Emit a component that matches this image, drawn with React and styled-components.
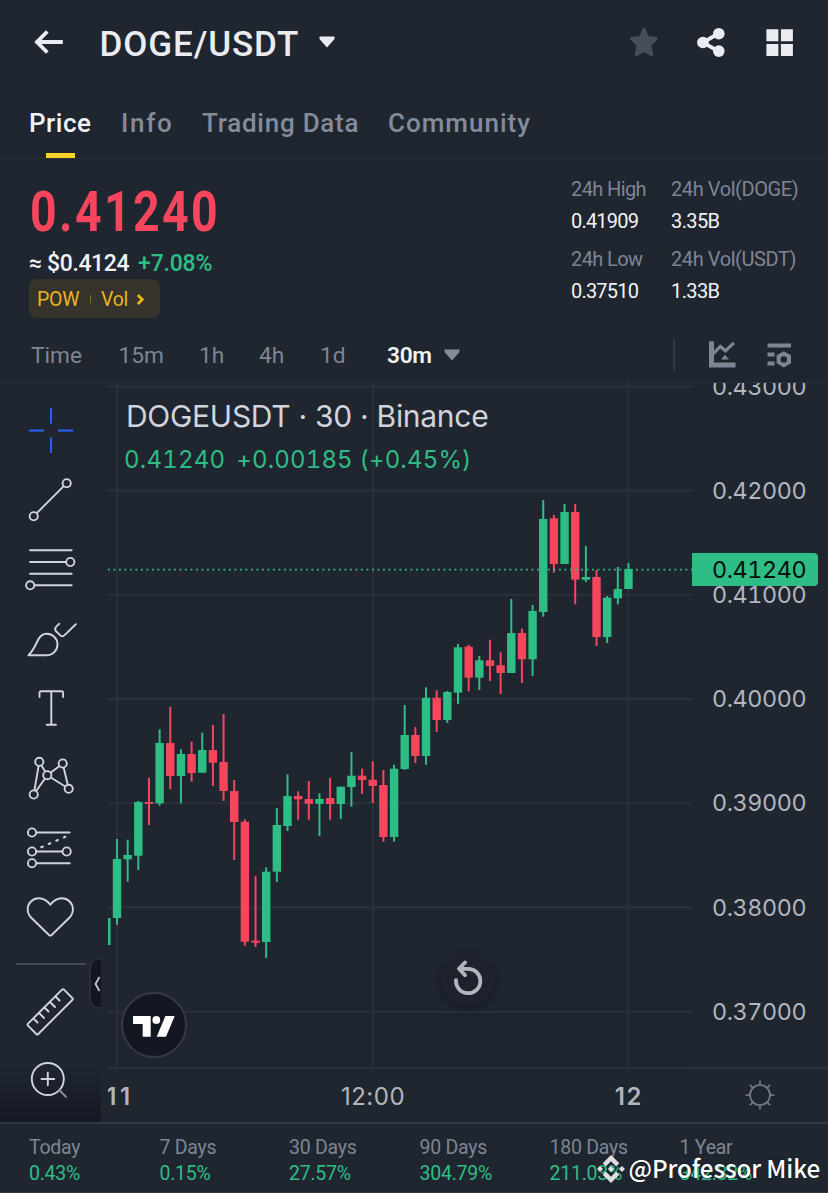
import React from "react";
import styled, { createGlobalStyle } from "styled-components";

const Global = createGlobalStyle`
  * { box-sizing: border-box; }
  html, body { margin: 0; padding: 0; background: #1f2630; }
  body { overflow: hidden; }
  svg { display: block; }
`;

const UP = "#2ebd85";
const DOWN = "#f6465d";
const MUTED = "#7e8594";
const LINE = "#2b313c";

const Screen = styled.div`
  width: 828px;
  height: 1193px;
  background: #1f2630;
  color: #eaecef;
  font-family: Roboto, "Noto Sans", sans-serif;
  display: flex;
  flex-direction: column;
  overflow: hidden;
`;

const Header = styled.header`
  height: 84px;
  flex: none;
  padding: 0 34px;
  display: flex;
  align-items: center;
  line-height: 1;
`;

const Pair = styled.h1`
  margin: 4.5px 0 0 35.5px;
  width: 219px;
  font-size: 35px;
  font-weight: 500;
  letter-spacing: 0.9px;
  white-space: nowrap;
  color: #eaecf2;
`;

const HeaderActions = styled.div`
  margin-left: auto;
  display: flex;
  align-items: center;
  gap: 38px;
`;

const Tabs = styled.nav`
  height: 75px;
  flex: none;
  padding-left: 29px;
  display: grid;
  grid-template-columns: 92px 81px 186px auto;
  border-bottom: 1.5px solid ${LINE};
`;

const Tab = styled.div`
  display: flex;
  flex-direction: column;
  align-items: flex-start;
  padding-top: 24px;
  font-size: 26px;
  line-height: 30px;
  font-weight: 500;
  letter-spacing: ${(p) => p.$track || 0.5}px;
  white-space: nowrap;
  color: ${(p) => (p.$active ? "#f2f3f6" : "#848b9b")};
`;

const Underline = styled.span`
  width: 29px;
  height: 5px;
  margin: 15px 0 0 17px;
  background: #fcd12b;
`;

const Ticker = styled.section`
  height: 168px;
  flex: none;
  padding: 0 0 0 29px;
  display: flex;
  justify-content: space-between;
`;

const PriceBlock = styled.div`
  padding-top: 24px;
`;

const BigPrice = styled.div`
  height: 60px;
  line-height: 58px;
  font-size: 55px;
  font-weight: 700;
  letter-spacing: 2.8px;
  margin-left: 1px;
  color: ${DOWN};
  transform: scaleX(0.845);
  transform-origin: left center;
  width: 200px;
`;

const SubPrice = styled.div`
  margin-top: 6px;
  height: 30px;
  line-height: 30px;
  font-size: 23px;
  font-weight: 500;
  letter-spacing: -0.4px;
  white-space: nowrap;
  color: #f1f2f5;
  display: flex;
  gap: 9px;
`;

const Change = styled.span`
  color: ${UP};
  letter-spacing: -0.2px;
`;

const Chip = styled.div`
  width: 131px;
  height: 39px;
  border-radius: 8px;
  background: #36332c;
  color: #e8b51e;
  font-size: 19.5px;
  line-height: 39px;
  letter-spacing: -0.2px;
  padding: 1px 0 0 8px;
  display: flex;
  align-items: center;
`;

const ChipBar = styled.i`
  width: 1.5px;
  height: 8px;
  margin: 0 9.5px 0 10.5px;
  background: #8a7022;
`;

const Stats = styled.div`
  width: 257px;
  padding-top: 15.4px;
  display: grid;
  grid-template-columns: 100px auto;
  grid-auto-rows: 70px;
  font-size: 20px;
`;

const Stat = styled.div`
  line-height: 31px;
  letter-spacing: ${(p) => p.$track || -0.42}px;
  white-space: nowrap;
  color: ${MUTED};
`;

const StatValue = styled.div`
  letter-spacing: ${(p) => p.$track || -0.8}px;
  padding-top: 0.6px;
  color: #f1f2f5;
`;

const Intervals = styled.div`
  height: 56px;
  flex: none;
  padding: 1px 0 0 31px;
  display: grid;
  grid-template-columns: 87.5px 80.5px 60px 61px 67px 56.5px 229.5px 35.5px 58.5px auto;
  align-items: center;
  border-bottom: 1.5px solid ${LINE};
  font-size: 22.7px;
  svg { margin-top: -1px; }
`;

const Interval = styled.span`
  color: ${(p) => (p.$active ? "#f1f2f5" : MUTED)};
  font-weight: ${(p) => (p.$active ? 600 : 400)};
  letter-spacing: ${(p) => (p.$active ? -0.3 : 0)}px;
  padding-top: 1px;
`;

const VRule = styled.i`
  width: 1.5px;
  height: 32px;
  background: #333945;
`;

const ChartArea = styled.main`
  height: 739px;
  flex: none;
  display: flex;
  font-family: Inter, "Liberation Sans", sans-serif;
`;

const Toolbar = styled.aside`
  position: relative;
  width: 101px;
  flex: none;
  padding-top: 12.4px;
  display: flex;
  flex-direction: column;
  align-items: center;
  background: linear-gradient(to bottom, transparent 684px, #151823 739px);
`;

const Tool = styled.div`
  height: ${(p) => p.$h || 69.5}px;
  flex: none;
  display: flex;
  align-items: center;
  padding-left: 1px;
`;

const ToolRule = styled.hr`
  width: 70px;
  height: 2px;
  border: 0;
  margin: 11.6px 0 13.5px;
  flex: none;
  background: #454a55;
`;

const CollapseTab = styled.div`
  position: absolute;
  right: 0;
  top: 575px;
  width: 12px;
  height: 51px;
  border: 2px solid #2a2e39;
  border-right: 0;
  border-radius: 9px 0 0 9px;
  background: #131722;
  display: flex;
  align-items: center;
  padding-left: 3px;
`;

const PlotColumn = styled.div`
  position: relative;
  width: 584px;
  margin-left: 7px;
  flex: none;
`;

const Legend = styled.div`
  position: absolute;
  left: 18px;
  top: 15px;
  white-space: nowrap;
`;

const LegendTitle = styled.div`
  font-size: 30px;
  line-height: 36px;
  letter-spacing: -0.29px;
  color: #d1d4dc;
`;

const LegendValues = styled.div`
  margin: 10px 0 0 -2px;
  font-size: 24px;
  line-height: 32px;
  letter-spacing: 0.2px;
  font-feature-settings: "tnum";
  color: ${UP};
  display: flex;
  gap: ${(p) => p.$gap || 11}px;
`;

const TvBadge = styled.div`
  position: absolute;
  left: 13px;
  top: 609px;
  width: 66px;
  height: 66px;
  border-radius: 50%;
  border: 2px solid #363a45;
  background: #131722;
  display: flex;
  align-items: center;
  justify-content: center;
  padding-top: 2px;
`;

const ResetButton = styled.div`
  position: absolute;
  left: 333px;
  top: 569px;
  width: 54px;
  height: 54px;
  border-radius: 50%;
  background: #1e222d;
  box-shadow: 0 3px 7px rgba(12, 14, 24, 0.55);
  display: flex;
  align-items: center;
  justify-content: center;
`;

const TimeAxis = styled.div`
  height: 53px;
  display: flex;
  overflow: hidden;
  font-size: 24px;
  line-height: 55px;
  color: #b2b5be;
`;

const TimeLabel = styled.span`
  width: ${(p) => p.$w}px;
  margin-left: ${(p) => p.$ml || 0}px;
  flex: none;
  text-align: center;
  font-weight: ${(p) => (p.$bold ? 600 : 400)};
  letter-spacing: ${(p) => p.$track}px;
`;

const PriceAxis = styled.div`
  position: relative;
  width: 136px;
  height: 739px;
  flex: none;
  display: flex;
  flex-direction: column;
`;

const PriceScale = styled.div`
  height: 686px;
  overflow: hidden;
  border-bottom: 2px solid ${LINE};
`;

const PriceTick = styled.div`
  height: 104.2px;
  line-height: 104.2px;
  padding-left: 20px;
  font-size: 23.3px;
  letter-spacing: -0.4px;
  font-feature-settings: "tnum";
  color: #b2b5be;
  &:first-child { margin-top: -48.4px; }
`;

const LastPrice = styled.div`
  position: absolute;
  left: 0;
  top: 170px;
  width: 126px;
  height: 33px;
  border-radius: 0 4px 4px 0;
  background: ${UP};
  color: #05100c;
  padding-left: 20px;
  font-size: 23.3px;
  line-height: 33px;
  letter-spacing: -0.4px;
  font-feature-settings: "tnum";
`;

const AxisCorner = styled.div`
  height: 51px;
  display: flex;
  align-items: center;
  justify-content: center;
`;

const Returns = styled.footer`
  position: relative;
  height: 71px;
  flex: none;
  border-top: 2px solid #333944;
  border-bottom: 1.5px solid #333944;
  padding: 9.6px 0 0 29px;
  display: grid;
  grid-template-columns: 130.5px 129.5px 130.5px 130px 130px auto;
  font-size: 19.5px;
  line-height: 27px;
`;

const Period = styled.div`
  color: ${MUTED};
  letter-spacing: -0.25px;
  white-space: nowrap;
`;

const PeriodValue = styled.div`
  color: ${UP};
  letter-spacing: -0.25px;
  margin-top: -0.8px;
`;

const Watermark = styled.div`
  position: absolute;
  right: 8px;
  bottom: 6px;
  display: flex;
  align-items: center;
  gap: 4px;
  color: #fff;
  font-family: "Noto Sans CJK SC", "Noto Sans", sans-serif;
  font-size: 24.2px;
  line-height: 36px;
  font-weight: 500;
  letter-spacing: -0.1px;
  white-space: nowrap;
  text-shadow: 0 0 2px rgba(0, 0, 0, 0.35);
  span { margin-top: -2.5px; }
`;

/* high, body top, body bottom, low (screen y), rising */
const candles = [
  [918, 918, 945, 945, 1],
  [839, 859, 918, 924.7, 1], [839.7, 855, 859.3, 881.7, 1], [801, 802, 855.7, 870, 1],
  [777.7, 802, 804, 825, 0], [729.3, 743, 803.3, 805.7, 1], [706.7, 743, 776, 789.3, 0],
  [749.3, 754, 776, 803.3, 1], [741.7, 754, 773, 781.7, 0], [732.7, 750, 772.7, 772.7, 1],
  [725, 750, 762.7, 786, 0], [714, 762, 791, 801, 0], [780, 791, 822, 860, 0],
  [819.3, 821.7, 941.7, 945.7, 0], [876, 940.7, 942.7, 947, 0], [867.3, 871.7, 942, 958, 1],
  [808, 825, 871.7, 882, 1], [774.3, 796, 826, 831, 1], [791.3, 796, 799.3, 819.7, 0],
  [781, 799, 803.7, 819.7, 0], [793.3, 799, 803.7, 836, 1], [777.7, 798, 804, 819.7, 0],
  [786.7, 786.7, 804, 819, 1], [752, 775.7, 787, 806.7, 1], [768.7, 775.7, 780, 794, 0],
  [761.3, 779.7, 786, 803, 0], [770, 785, 837, 841.7, 0], [764.7, 768.7, 837, 841.7, 1],
  [705, 735, 769, 770, 1], [727, 735, 756, 763, 0], [687.3, 697.7, 756, 764.7, 1],
  [690.3, 697.7, 720, 732, 0], [691, 692, 720, 723, 1], [644, 647.3, 692.7, 704, 1],
  [645, 646.7, 677.7, 691.3, 0], [656, 660.3, 677.7, 690, 1], [639.7, 660.3, 666, 681, 0],
  [652.3, 665.3, 673, 694, 0], [599, 633, 673, 673, 1], [628.7, 633, 659.3, 683, 0],
  [605, 611, 659.3, 676, 1], [500, 519, 612, 616.7, 1], [515, 518.3, 564, 572.7, 0],
  [504, 512, 564, 564, 1], [504, 512, 579.7, 604.3, 0], [546, 577, 579.7, 582, 1],
  [570, 577, 637, 646, 0], [596, 597.7, 637, 643, 1], [567, 589, 598.3, 604.3, 1],
  [563, 569, 589, 589, 1],
];

const hLines = [386.5, 490.5, 594.8, 699, 803.2, 907.5, 1011.6];
const vLines = [117, 373, 628.5];

function Plot() {
  return (
    <svg width="584" height="686" viewBox="108 383 584 686">
      <g stroke="#2c323d" strokeWidth="1.8">
        {hLines.map((y) => <line key={y} x1="108" x2="692" y1={y} y2={y} />)}
        {vLines.map((x) => <line key={x} x1={x} x2={x} y1="383" y2="1068" />)}
        <line x1="108" x2="692" y1="1068.2" y2="1068.2" />
      </g>
      {candles.map(([h, t, b, l, up], i) => {
        const x = 117 + (i - 1) * 10.656;
        return (
          <g key={i} fill={up ? UP : DOWN}>
            <rect x={x - 1} y={h} width="2" height={l - h} />
            <rect x={x - 4.2} y={t} width="8.4" height={b - t} />
          </g>
        );
      })}
      <line x1="108" x2="692" y1="569.7" y2="569.7" stroke={UP} strokeWidth="1.8" strokeDasharray="1.8 3.7" />
    </svg>
  );
}

function ToolIcon({ children, color = "#d1d4dc" }) {
  return (
    <svg width="60" height="60" viewBox="-30 -30 60 60" fill="none" stroke={color} strokeWidth="1.9" strokeLinecap="round" strokeLinejoin="round">
      {children}
    </svg>
  );
}

const Ring = ({ x, y }) => <circle cx={x} cy={y} r="4.1" fill="#1f2630" />;

const tools = [
  <ToolIcon key="cross" color="#2962ff"><path strokeLinecap="butt" d="M0-22V-6.500M0 7.500V23M-22 .5H-7M7 .5H22.3" /></ToolIcon>,
  <ToolIcon key="trend"><path d="M-17.3 16.2 15.7-16.8" /><Ring x={-17.3} y={16.2} /><Ring x={15.7} y={-16.8} /></ToolIcon>,
  <ToolIcon key="fib">
    <path d="M-21-18.7H20.7M-21-7H15M-21 4.7H20.7M-17 16.3H20.7" />
    <Ring x={19.3} y={-7} /><Ring x={-20.8} y={16.3} />
  </ToolIcon>,
  <ToolIcon key="brush">
    <path d="M-22.600 16.300C-18 12-15.500 6.500-13 1C-11-3-8-5.300-4.300-5.300A10.800 10.800 0 0 1-4.300 16.300Z" />
    <path d="M8.300-15.300C4.500-12.500 3-10.500 4.800-8L9.300-3.600Q11.300-1.800 13.300-3.600L24.800-14.800" />
  </ToolIcon>,
  <ToolIcon key="text"><path d="M-11.500-11V-15Q-11.500-16.700-10-16.700H10.600Q12.100-16.700 12.100-15V-11M.3-16.700V16.700M-4.300 16.700H5" /></ToolIcon>,
  <ToolIcon key="pattern">
    <path d="M-17.3 16.500-11.700-16.200-3.700-2.800ZM-3.700-2.800 11.700-14.500 17.700 10.800Z" />
    <Ring x={-11.7} y={-16.2} /><Ring x={11.7} y={-14.5} /><Ring x={-3.7} y={-2.8} /><Ring x={-17.3} y={16.5} /><Ring x={17.7} y={10.8} />
  </ToolIcon>,
  <ToolIcon key="forecast">
    <path d="M-19-14.500H18.700M-19 4.500H15.700M-19 16.200H18.700" />
    <path d="M-9.700.2 15-10.500" strokeDasharray="1.600 6.600" strokeWidth="2.200" />
    <Ring x={-19} y={-14.5} /><Ring x={-19} y={4.5} /><Ring x={15.7} y={4.5} /><Ring x={-19} y={16.2} />
  </ToolIcon>,
  <ToolIcon key="heart">
    <path d="M-.7-12.300C-4-16.500-7.500-18.700-12-18.700C-18.500-18.700-23.300-14-23.300-7.500C-23.300-4-22-1.500-19.500 1L-2 18Q-.7 19.200.6 18L18.100 1C20.600-1.500 21.900-4 21.900-7.500C21.900-14 17.100-18.700 10.600-18.700C6.100-18.700 2.600-16.500-.7-12.300Z" />
  </ToolIcon>,
];

function ArrowLeft() {
  return (
    <svg width="30" height="26" viewBox="0 0 30 26" fill="none" stroke="#eaecf2" strokeWidth="3.900">
      <path d="M13.300 2.500 3 13 13.300 23.500M2.500 13H28.800" />
    </svg>
  );
}

function Caret({ color }) {
  return <svg width="16" height="12" viewBox="0 0 16 12"><path fill={color} d="M.5.500H15.500V3L8 11.600.5 3Z" /></svg>;
}

export default function App() {
  return (
    <Screen>
      <Global />
      <Header>
        <ArrowLeft />
        <Pair>DOGE/USDT</Pair>
        <Caret color="#eaecf2" />
        <HeaderActions>
          <svg width="30" height="30" viewBox="0 0 30 30">
            <path d="M16 2.200 19.600 10.400 28.300 11.500 22 18 23.700 27.700 16 23.300 8.300 27.700 10 18 3.500 11.500 12.400 10.400Z" fill="#474d5b" stroke="#474d5b" strokeWidth="2.800" strokeLinejoin="round" />
          </svg>
          <svg width="30" height="30" viewBox="0 0 30 30" fill="#eaecf2" stroke="#eaecf2">
            <path d="M22.200 6.700 7 15.500 22.200 24.100" fill="none" strokeWidth="3.800" />
            <g stroke="none"><circle cx="6.900" cy="15.500" r="5.800" /><circle cx="22.800" cy="6.700" r="5.800" /><circle cx="22.800" cy="24.100" r="5.800" /></g>
          </svg>
          <svg width="30" height="30" viewBox="0 0 30 30" fill="#eaecf2">
            <path d="M2.400 2.300h12v12h-12zM16.900 2.300h12v12h-12zM2.400 17h12v12h-12zM16.900 17h12v12h-12z" />
          </svg>
        </HeaderActions>
      </Header>

      <Tabs>
        <Tab $active>Price<Underline /></Tab>
        <Tab $track={1.7}>Info</Tab>
        <Tab $track={0.75}>Trading Data</Tab>
        <Tab $track={1}>Community</Tab>
      </Tabs>

      <Ticker>
        <PriceBlock>
          <BigPrice>0.41240</BigPrice>
          <SubPrice><span>≈ $0.4124</span><Change>+7.08%</Change></SubPrice>
          <Chip>
            POW<ChipBar />Vol
            <svg width="9" height="13" viewBox="0 0 10 14" style={{ marginLeft: 8 }} fill="none" stroke="#f0b90b" strokeWidth="3"><path d="M2 2 7 7 2 12" /></svg>
          </Chip>
        </PriceBlock>
        <Stats>
          <Stat $track={-0.6}>24h High<StatValue>0.41909</StatValue></Stat>
          <Stat>24h Vol(DOGE)<StatValue $track={-0.6}>3.35B</StatValue></Stat>
          <Stat $track={-0.6}>24h Low<StatValue>0.37510</StatValue></Stat>
          <Stat>24h Vol(USDT)<StatValue $track={-0.6}>1.33B</StatValue></Stat>
        </Stats>
      </Ticker>

      <Intervals>
        <Interval>Time</Interval>
        <Interval>15m</Interval>
        <Interval>1h</Interval>
        <Interval>4h</Interval>
        <Interval>1d</Interval>
        <Interval $active>30m</Interval>
        <Caret color="#848b9b" />
        <VRule />
        <svg width="27" height="27" viewBox="0 0 27 27" fill="none" stroke="#7e8594">
          <path d="M2.500.3V24H26.500" strokeWidth="5" />
          <path d="M4 13 11.300 5.500 16.500 9.800 24.800 1.800" strokeWidth="3.200" />
          <path d="M12 18.500 16 13.800 20 18.500Z" fill="#7e8594" stroke="none" />
        </svg>
        <svg width="25" height="26" viewBox="0 0 25 26" fill="#7e8594">
          <path d="M.5 1.500h23.500v4H.5zM.5 10.500h7v4h-7zM.5 19.500h7v4h-7z" />
          <path fillRule="evenodd" d="M16.800 9.200 24 13.300V21.300L16.800 25.500 9.600 21.300V13.300ZM16.800 14.200a3.200 3.200 0 1 0 0 6.400a3.200 3.200 0 1 0 0-6.400Z" />
        </svg>
      </Intervals>

      <ChartArea>
        <Toolbar>
          {tools.map((t) => <Tool key={t.key}>{t}</Tool>)}
          <ToolRule />
          <Tool $h={67}>
            <ToolIcon>
              <path d="M11-22.300Q12-23.200 13-22.300L21.300-14Q22.300-13 21.300-12L-12.700 22Q-13.700 23-14.700 22L-23 13.700Q-24 12.700-23 11.700Z" />
              <path d="M-17.500 6.500-13.500 10.500M-12 1-7 6M-6.500-4.500-2.500-.5M-1-10 4-5M4.500-15.500 8.500-11.500" />
            </ToolIcon>
          </Tool>
          <Tool $h={69}>
            <ToolIcon>
              <circle cx="-3.200" cy="-1" r="16" />
              <path d="M-9.500-1H3.200M-3.200-7.400V5.300" />
              <path d="M8.200 10 15 16.800" stroke="#8d909b" />
            </ToolIcon>
          </Tool>
          <CollapseTab>
            <svg width="6" height="16" viewBox="0 0 6 16" fill="none" stroke="#c5c8d0" strokeWidth="1.800"><path d="M5.500 1 1.500 8 5.500 15" /></svg>
          </CollapseTab>
        </Toolbar>

        <PlotColumn>
          <Plot />
          <TimeAxis>
            <TimeLabel $bold $track={3.5} $w={40} $ml={-8}>11</TimeLabel>
            <TimeLabel $track={0.5} $w={100} $ml={183}>12:00</TimeLabel>
            <TimeLabel $bold $track={1.8} $w={60} $ml={176}>12</TimeLabel>
          </TimeAxis>
          <Legend>
            <LegendTitle>DOGEUSDT · 30 · Binance</LegendTitle>
            <LegendValues><span>0.41240</span><LegendChange>+0.00185 (+0.45%)</LegendChange></LegendValues>
          </Legend>
          <TvBadge>
            <svg width="42" height="21" viewBox="0 0 42 21" fill="#fff">
              <path d="M0 0H17.700V20.700H9.700V8H0Z" /><circle cx="23.300" cy="3.900" r="3.900" /><path d="M32.400 0H41.700L33 20.700H23.700Z" />
            </svg>
          </TvBadge>
          <ResetButton>
            <svg width="34" height="38" viewBox="-17 -19 34 38" fill="none" stroke="#b2b5be" strokeWidth="3.800" strokeLinecap="round" strokeLinejoin="round">
              <path d="M-12 1.200A12.200 12.200 0 1 0 0-10.200H-8M-3-16.500-9-10.200-3-3.900" />
            </svg>
          </ResetButton>
        </PlotColumn>

        <PriceAxis>
          <PriceScale>
            {["0.43000", "0.42000", "0.41000", "0.40000", "0.39000", "0.38000", "0.37000"].map((v) => <PriceTick key={v}>{v}</PriceTick>)}
          </PriceScale>
          <LastPrice>0.41240</LastPrice>
          <AxisCorner>
            <svg width="32" height="32" viewBox="-16 -16 32 32" fill="none" stroke="#787b86" strokeWidth="1.700">
              <circle r="10" />
              {[0, 45, 90, 135, 180, 225, 270, 315].map((a) => <path key={a} d="M0-10V-14.500" transform={`rotate(${a})`} />)}
            </svg>
          </AxisCorner>
        </PriceAxis>
      </ChartArea>

      <Returns>
        {[["Today", "0.43%"], ["7 Days", "0.15%"], ["30 Days", "27.57%"], ["90 Days", "304.79%"], ["180 Days", "211.03%"], ["1 Year", "342.32%"]].map(([p, v]) => (
          <Period key={p}>{p}<PeriodValue>{v}</PeriodValue></Period>
        ))}
        <Watermark>
          <svg width="28" height="28" viewBox="-14 -14 28 28" fill="#dcdee0">
            <path d="M0-14 8.300-5.700 5.200-2.600 0-7.800-5.200-2.600-8.300-5.700ZM0 14 8.300 5.700 5.200 2.600 0 7.800-5.200 2.600-8.300 5.700ZM0-3.100 3.100 0 0 3.100-3.100 0ZM-11-3.100-7.900 0-11 3.100-14.100 0ZM11-3.100 14.100 0 11 3.100 7.900 0Z" />
          </svg>
          <span>@Professor Mike</span>
        </Watermark>
      </Returns>
    </Screen>
  );
}

const LegendChange = styled.span`
  letter-spacing: 0.15px;
`;
